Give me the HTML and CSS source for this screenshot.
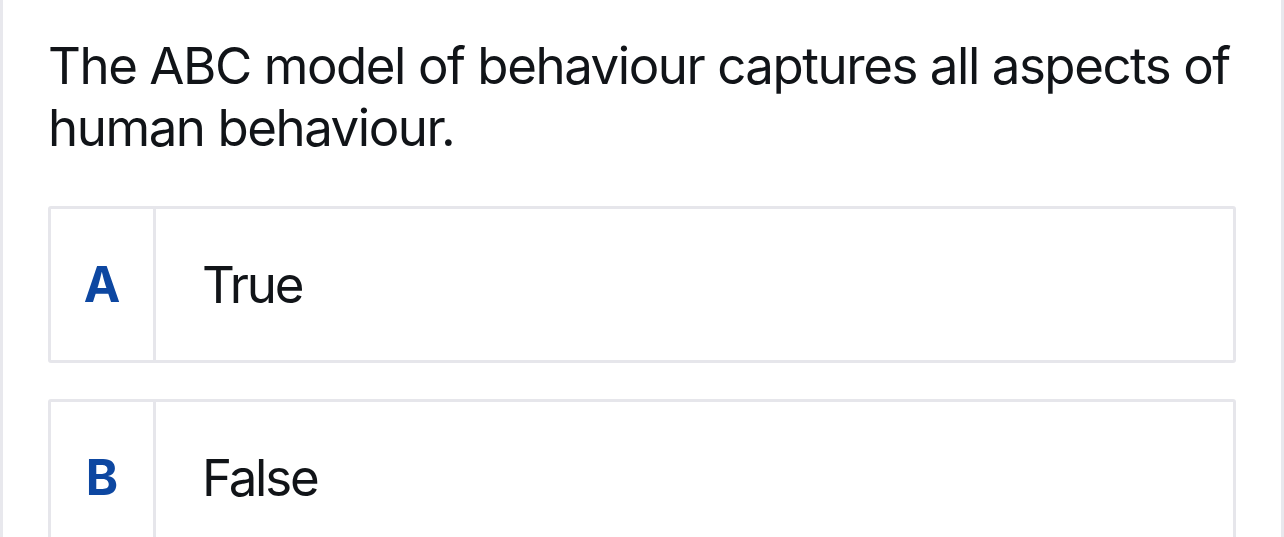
FILE: index.html
```html
<!DOCTYPE html>
<html>
<head>
<meta charset="utf-8">
<link rel="stylesheet" href="styles.css">
</head>
<body>
<div class="page">
  <p class="question">The ABC model of behaviour captures all aspects of human behaviour.</p>
  <div class="options">
    <div class="option">
      <div class="letter">A</div>
      <div class="label">True</div>
    </div>
    <div class="option">
      <div class="letter">B</div>
      <div class="label">False</div>
    </div>
  </div>
</div>
</body>
</html>
```

FILE: styles.css
```css
html, body {
  margin: 0;
  padding: 0;
  background: #ffffff;
}
body {
  font-family: Inter, "Liberation Sans", sans-serif;
  color: #111418;
}
.page {
  border-left: 3px solid #e8e8ed;
  border-right: 3px solid #e8e8ed;
  padding: 35px 45px 0 45px;
  min-height: 537px;
  box-sizing: border-box;
}
.question {
  margin: 0;
  font-size: 51px;
  line-height: 62px;
  letter-spacing: -1.45px;
}
.options {
  margin-top: 47px;
  display: flex;
  flex-direction: column;
  gap: 36px;
}
.option {
  display: flex;
  height: 157px;
  box-sizing: border-box;
  border: 3px solid #e6e6eb;
  border-radius: 3px;
}
.letter {
  width: 102px;
  border-right: 3px solid #e6e6eb;
  display: flex;
  align-items: center;
  justify-content: center;
  font-size: 49px;
  font-weight: 700;
  color: #0d47a1;
}
.label {
  display: flex;
  align-items: center;
  padding-left: 46px;
  font-size: 51px;
  letter-spacing: -2.2px;
}
```
